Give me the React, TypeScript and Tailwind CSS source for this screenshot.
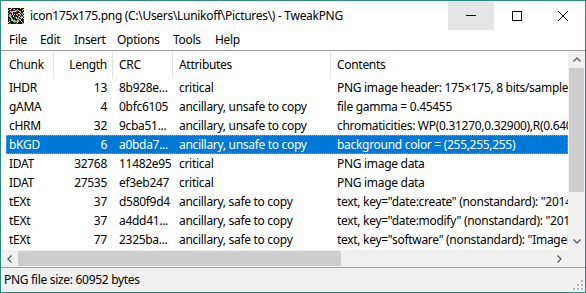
import React from 'react';

type Row = { chunk: string; len: string; crc: string; attr: string; contents: string; selected?: boolean };

const ROWS: Row[] = [
  { chunk: 'IHDR', len: '13', crc: '8b928e...', attr: 'critical', contents: 'PNG image header: 175×175, 8 bits/sample, truecolor+alpha, noninterlaced' },
  { chunk: 'gAMA', len: '4', crc: '0bfc6105', attr: 'ancillary, unsafe to copy', contents: 'file gamma = 0.45455' },
  { chunk: 'cHRM', len: '32', crc: '9cba51...', attr: 'ancillary, unsafe to copy', contents: 'chromaticities: WP(0.31270,0.32900),R(0.64000,0.33000)' },
  { chunk: 'bKGD', len: '6', crc: 'a0bda7...', attr: 'ancillary, unsafe to copy', contents: 'background color = (255,255,255)', selected: true },
  { chunk: 'IDAT', len: '32768', crc: '11482e95', attr: 'critical', contents: 'PNG image data' },
  { chunk: 'IDAT', len: '27535', crc: 'ef3eb247', attr: 'critical', contents: 'PNG image data' },
  { chunk: 'tEXt', len: '37', crc: 'd580f9d4', attr: 'ancillary, safe to copy', contents: 'text, key="date:create" (nonstandard): "2014-05-20T10:11:12+04:00"' },
  { chunk: 'tEXt', len: '37', crc: 'a4dd41...', attr: 'ancillary, safe to copy', contents: 'text, key="date:modify" (nonstandard): "2014-05-20T10:11:12+04:00"' },
  { chunk: 'tEXt', len: '77', crc: '2325ba...', attr: 'ancillary, safe to copy', contents: 'text, key="software" (nonstandard): "ImageMagick 6.8.9-0 Q16 x86"' },
];

const MENU = [
  { label: 'File', w: 'w-[31px]' },
  { label: 'Edit', w: 'w-[34px]' },
  { label: 'Insert', w: 'w-[43px]' },
  { label: 'Options', w: 'w-[56px]' },
  { label: 'Tools', w: 'w-[42px]' },
  { label: 'Help', w: 'w-[40px]' },
];

// noisy little program icon, drawn pixel by pixel
const AppIcon = () => {
  const cells: React.ReactNode[] = [];
  const pal = ['#e01818', '#18c028', '#f0e020', '#2850e8', '#20c8c8', '#e8e8e8'];
  let s = 11;
  for (let y = 0; y < 16; y++) {
    for (let x = 0; x < 16; x++) {
      s = (Math.imul(s, 1103515245) + 12345) & 0x7fffffff;
      const d = Math.hypot(x - 7.5, y - 7.5);
      let c = '#141414';
      if (d > 4.6 && d < 6.4 && (s >> 5) % 4 !== 0) c = '#b8b8b8';
      else if (x === y && x > 9) c = '#b8b8b8';
      else if ((s >> 8) % 3 === 0) c = pal[(s >> 4) % pal.length];
      cells.push(<rect key={`${x}-${y}`} x={x} y={y} width={1} height={1} fill={c} />);
    }
  }
  return (
    <svg width="16" height="16" viewBox="0 0 16 16" shapeRendering="crispEdges">
      {cells}
    </svg>
  );
};

const Chevron = ({ dir }: { dir: 'up' | 'down' | 'left' | 'right' }) => {
  const pts = {
    up: '0.5,4.5 4,1 7.5,4.5',
    down: '0.5,0.5 4,4 7.5,0.5',
    left: '4.5,0.5 1,4 4.5,7.5',
    right: '0.5,0.5 4,4 0.5,7.5',
  }[dir];
  const vertical = dir === 'up' || dir === 'down';
  return (
    <svg width={vertical ? 8 : 5} height={vertical ? 5 : 8} viewBox={vertical ? '0 0 8 5' : '0 0 5 8'}>
      <polyline points={pts} fill="none" stroke="#606060" strokeWidth="1.4" />
    </svg>
  );
};

export default function App() {
  return (
    <div className="w-[586px] h-[293px] border border-[#2b8a7e] bg-white flex flex-col overflow-hidden font-['Noto_Sans',sans-serif] text-[12px] tracking-[-0.3px] text-black leading-none">
      {/* Title bar */}
      <div className="h-[29px] flex items-center shrink-0">
        <div className="pl-[7px] pr-[6px] flex items-center">
          <AppIcon />
        </div>
        <div className="flex-1 whitespace-nowrap">icon175x175.png (C:\Users\Lunikoff\Pictures\) - TweakPNG</div>
        <div className="w-[46px] h-full bg-[#e5e5e5] flex items-center justify-center">
          <div className="w-[10px] h-px bg-black" />
        </div>
        <div className="w-[46px] h-full flex items-center justify-center">
          <div className="w-[10px] h-[10px] border border-black" />
        </div>
        <div className="w-[45px] h-full flex items-center justify-center">
          <svg width="10" height="10" viewBox="0 0 10 10">
            <path d="M0 0 L10 10 M10 0 L0 10" stroke="#000" strokeWidth="1" />
          </svg>
        </div>
      </div>

      {/* Menu bar */}
      <div className="h-[20px] flex items-center pl-[7px] shrink-0">
        {MENU.map(m => (
          <div key={m.label} className={`${m.w} pl-[1px] whitespace-nowrap`}>{m.label}</div>
        ))}
      </div>

      <div className="h-px bg-[#a0a0a0] shrink-0" />

      {/* List view */}
      <div className="h-[199px] flex shrink-0">
        <div className="flex-1 overflow-hidden">
          <div className="h-[27px] flex items-center whitespace-nowrap">
            <div className="w-[53px] h-full pl-[8px] flex items-center border-r border-[#e5e5e5]">Chunk</div>
            <div className="w-[59px] h-full pr-[5px] flex items-center justify-end border-r border-[#e5e5e5]">Length</div>
            <div className="w-[60px] h-full pl-[6px] flex items-center border-r border-[#e5e5e5]">CRC</div>
            <div className="w-[158px] h-full pl-[6px] flex items-center border-r border-[#e5e5e5]">Attributes</div>
            <div className="flex-1 h-full pl-[6px] flex items-center">Contents</div>
          </div>
          {ROWS.map((r, i) => (
            <div key={i} className="h-[19px] pl-[5px]">
              <div
                className={`h-full flex items-center whitespace-nowrap leading-[17px] ${
                  r.selected ? 'bg-[#0078d7] text-white outline-1 outline-dotted outline-[#e0904a] -outline-offset-1' : ''
                }`}
              >
                <div className="w-[48px] pl-[3px] shrink-0">{r.chunk}</div>
                <div className="w-[59px] pr-[6px] text-right shrink-0">{r.len}</div>
                <div className="w-[60px] pl-[6px] shrink-0">{r.crc}</div>
                <div className="w-[158px] pl-[6px] shrink-0 overflow-hidden">{r.attr}</div>
                <div className="flex-1 pl-[6px] overflow-hidden">{r.contents}</div>
              </div>
            </div>
          ))}
        </div>
        {/* vertical scrollbar */}
        <div className="w-[17px] bg-[#f0f0f0] flex flex-col">
          <div className="h-[17px] flex items-center justify-center"><Chevron dir="up" /></div>
          <div className="flex-1 flex flex-col">
            <div className="h-[124px] mx-px bg-[#cdcdcd]" />
          </div>
          <div className="h-[17px] flex items-center justify-center"><Chevron dir="down" /></div>
        </div>
      </div>

      {/* horizontal scrollbar */}
      <div className="h-[17px] flex shrink-0 bg-[#f0f0f0]">
        <div className="w-[17px] flex items-center justify-center"><Chevron dir="left" /></div>
        <div className="flex-1 flex py-px">
          <div className="w-[323px] bg-[#cdcdcd]" />
        </div>
        <div className="w-[17px] flex items-center justify-center"><Chevron dir="right" /></div>
        <div className="w-[17px] bg-[#f0f0f0]" />
      </div>

      <div className="h-px bg-[#a0a0a0] shrink-0" />

      {/* Status bar */}
      <div className="relative flex-1 bg-[#f0f0f0] flex items-center pl-[3px]">
        PNG file size: 60952 bytes
        <svg className="absolute right-[1px] bottom-[1px]" width="11" height="11" viewBox="0 0 11 11">
          {[
            [8, 0], [4, 4], [8, 4], [0, 8], [4, 8], [8, 8],
          ].map(([x, y]) => (
            <rect key={`${x}-${y}`} x={x} y={y} width="2" height="2" fill="#b8b8b8" />
          ))}
        </svg>
      </div>
    </div>
  );
}
